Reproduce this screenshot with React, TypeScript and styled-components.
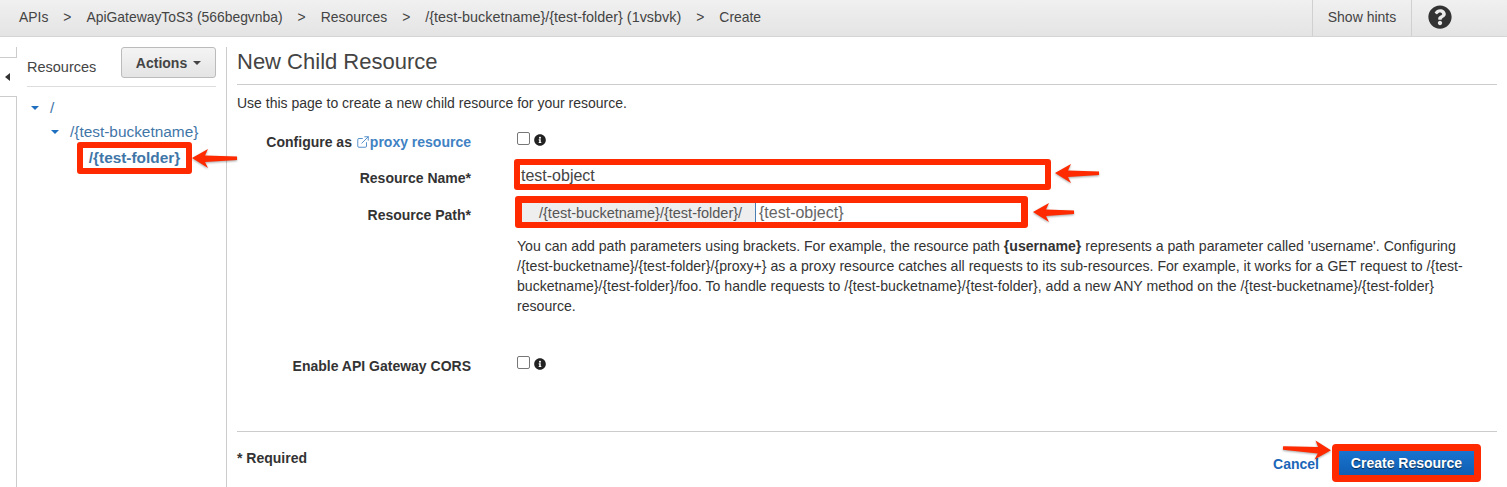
import React from 'react';
import styled, { createGlobalStyle } from 'styled-components';
import { FaInfoCircle, FaQuestionCircle } from 'react-icons/fa';
import { FiExternalLink } from 'react-icons/fi';

const GlobalStyle = createGlobalStyle`
  html, body {
    margin: 0;
    padding: 0;
    background: #fff;
  }
  body {
    font-family: 'Liberation Sans', Arial, sans-serif;
    font-size: 14px;
    color: #333;
  }
`;

const Page = styled.div`
  position: relative;
  width: 1507px;
  height: 487px;
  overflow: hidden;
  display: flex;
  flex-direction: column;
`;

const TopBar = styled.div`
  height: 37px;
  flex: none;
  display: flex;
  align-items: stretch;
  background: linear-gradient(#f0f0f0, #e4e4e4);
  border-bottom: 1px solid #d5d5d5;
  box-sizing: border-box;
`;

const Crumbs = styled.div`
  flex: 1;
  display: flex;
  align-items: center;
  gap: 15px;
  padding-left: 19px;
  padding-bottom: 3px;
  font-size: 13.9px;
  color: #444;
`;

const LongCrumb = styled.span`
  font-size: 14.4px;
`;

const HintButton = styled.div`
  width: 100px;
  display: flex;
  align-items: center;
  justify-content: center;
  padding-bottom: 3px;
  font-size: 14px;
  color: #444;
  border-left: 1px solid #d0d0d0;
  border-right: 1px solid #d0d0d0;
  box-sizing: border-box;
`;

const HelpSlot = styled.div`
  width: 95px;
  display: flex;
  align-items: center;
  padding-left: 16px;
  padding-bottom: 3px;
  box-sizing: border-box;
  color: #333;
  font-size: 24px;
`;

const Body = styled.div`
  flex: 1;
  display: flex;
  padding-top: 10px;
  min-height: 0;
`;

const Rail = styled.div`
  width: 17px;
  flex: none;
  display: flex;
  flex-direction: column;
`;

const RailTop = styled.div`
  height: 10px;
  border-right: 1px solid #ccc;
  border-bottom: 1px solid #ccc;
`;

const RailHandle = styled.div`
  height: 38px;
  display: flex;
  align-items: center;
  padding-left: 5px;
  &::before {
    content: '';
    border-style: solid;
    border-width: 4px 5px 4px 0;
    border-color: transparent #333 transparent transparent;
  }
`;

const RailBottom = styled.div`
  flex: 1;
  border-right: 1px solid #ccc;
  border-top: 1px solid #ccc;
`;

const Sidebar = styled.aside`
  width: 210px;
  flex: none;
  padding-left: 10px;
  padding-right: 10px;
  box-sizing: border-box;
  border-right: 1px solid #ccc;
`;

const SidebarHead = styled.div`
  display: flex;
  justify-content: space-between;
  height: 39px;
  border-bottom: 1px solid #ddd;
`;

const SidebarTitle = styled.div`
  font-size: 14.5px;
  color: #444;
  padding-top: 12px;
`;

const ActionsButton = styled.div`
  width: 95px;
  height: 31px;
  box-sizing: border-box;
  display: flex;
  align-items: center;
  justify-content: center;
  gap: 6px;
  font-size: 14px;
  font-weight: 700;
  color: #444;
  background: linear-gradient(#f4f4f4, #e4e4e4);
  border: 1px solid #bbb;
  border-radius: 3px;
  &::after {
    content: '';
    border-style: solid;
    border-width: 4px 4px 0 4px;
    border-color: #444 transparent transparent transparent;
  }
`;

const Tree = styled.div`
  padding-top: 9px;
`;

const TreeRow = styled.div<{ $indent: number }>`
  height: 24px;
  display: flex;
  align-items: center;
  padding-left: ${(p) => p.$indent}px;
  font-size: 15.4px;
  color: #3f76a8;
`;

const Caret = styled.span`
  border-style: solid;
  border-width: 4px 4.5px 0 4.5px;
  border-color: #1f6fc0 transparent transparent transparent;
  margin-right: 11px;
`;

const Highlight = styled.div`
  border: 6px solid #ff2a00;
  border-radius: 3px;
  box-sizing: border-box;
`;

const FolderHighlight = styled(Highlight)`
  width: 115px;
  height: 32px;
  margin-left: 50px;
  margin-top: -2px;
  display: flex;
  align-items: center;
  justify-content: center;
  font-size: 15.4px;
  font-weight: 700;
  color: #3f76a8;
`;

const Main = styled.main`
  flex: 1;
  min-width: 0;
  padding: 0 10px;
  display: flex;
  flex-direction: column;
`;

const PageTitle = styled.h1`
  margin: 0;
  height: 37px;
  font-size: 22px;
  font-weight: 400;
  line-height: 30px;
  color: #444;
  border-bottom: 1px solid #ccc;
`;

const Intro = styled.p`
  margin: 10px 0 0;
  line-height: 17px;
  font-size: 14px;
  color: #333;
`;

const Form = styled.div`
  display: grid;
  grid-template-columns: 234px 1fr;
  column-gap: 46px;
  align-items: start;
  margin-top: 19px;
`;

const Label = styled.div<{ $height: number }>`
  height: ${(p) => p.$height}px;
  display: flex;
  align-items: center;
  justify-content: flex-end;
  font-size: 14px;
  font-weight: 700;
  color: #333;
  white-space: pre;
`;

const ProxyLabel = styled(Label)`
  margin-bottom: 7px;
`;

const ProxyLink = styled.span`
  color: #3f82c4;
  display: inline-flex;
  align-items: center;
`;

const CheckRow = styled.div`
  display: flex;
  align-items: flex-start;
  gap: 4px;
  padding-top: 1px;
  font-size: 12px;
  color: #222;
`;

const InfoIcon = styled(FaInfoCircle)`
  margin-top: 2px;
`;

const CheckBox = styled.span`
  width: 13px;
  height: 13px;
  box-sizing: border-box;
  border: 1px solid #777;
  border-radius: 2px;
  background: #fff;
`;

const NameBox = styled(Highlight)`
  width: 537px;
  height: 31px;
  margin-left: -3px;
  margin-bottom: 6px;
  display: flex;
  align-items: center;
  padding-left: 1px;
  padding-top: 2px;
  font-size: 16px;
  color: #444;
`;

const PathBox = styled(Highlight)`
  width: 513px;
  height: 32px;
  margin-left: -2px;
  display: flex;
  border-width: 7px 7px 6px 7px;
`;

const PathPrefix = styled.div`
  width: 234px;
  flex: none;
  background: #eee;
  border-right: 1px solid #4a7fb5;
  box-sizing: border-box;
  padding-left: 17px;
  line-height: 20px;
  font-size: 14.5px;
  color: #555;
  white-space: nowrap;
`;

const PathInput = styled.div`
  flex: 1;
  line-height: 20px;
  font-size: 16px;
  color: #666;
  padding-left: 3px;
`;

const HelpText = styled.p`
  grid-column: 2;
  margin: 3px 0 0;
  width: 962px;
  font-size: 14.1px;
  line-height: 20px;
  color: #333;
`;

const CorsLabel = styled(Label)`
  margin-top: 39px;
`;

const CorsCheck = styled(CheckRow)`
  margin-top: 39px;
`;

const Footer = styled.div`
  margin-top: auto;
  margin-bottom: 4px;
  height: 51px;
  border-top: 1px solid #ccc;
  display: flex;
  justify-content: space-between;
`;

const Required = styled.div`
  padding-top: 18px;
  font-size: 14px;
  font-weight: 700;
  color: #333;
`;

const FooterActions = styled.div`
  display: flex;
  align-items: flex-start;
  margin-right: 16px;
`;

const CancelLink = styled.span`
  margin-top: 24px;
  margin-right: 13px;
  font-size: 14px;
  font-weight: 700;
  color: #1b66b8;
`;

const CreateHighlight = styled(Highlight)`
  width: 149px;
  height: 38px;
  margin-top: 12px;
  border-width: 7px;
  border-radius: 4px;
`;

const CreateButton = styled.div`
  height: 100%;
  display: flex;
  align-items: center;
  justify-content: center;
  background: linear-gradient(#1a73cf, #0f5fb3);
  color: #fff;
  font-size: 14px;
  font-weight: 700;
  text-shadow: 0 1px 1px rgba(0, 0, 0, 0.6);
`;

// the red call-out arrows sit on top of the page
const ArrowMark = styled.svg<{ $x: number; $y: number; $w: number }>`
  position: absolute;
  left: ${(p) => p.$x}px;
  top: ${(p) => p.$y}px;
  width: ${(p) => p.$w}px;
  height: 22px;
  overflow: visible;
  filter: drop-shadow(0 1px 1px rgba(0, 0, 0, 0.35));
`;

function Arrow({ x, y, w, flip }: { x: number; y: number; w: number; flip?: boolean }) {
  return (
    <ArrowMark $x={x} $y={y} $w={w} viewBox={`0 0 ${w} 22`}>
      <path
        fill="#ff2a00"
        transform={flip ? `translate(${w} 0) scale(-1 1) rotate(-3 ${w / 2} 11)` : undefined}
        d={`M0 11 L16 2 L13 8.5 L${w} 9.5 L${w} 13 L13 15 L16 21 Z`}
      />
    </ArrowMark>
  );
}

const helpBefore = 'You can add path parameters using brackets. For example, the resource path ';
const helpAfter =
  " represents a path parameter called 'username'. Configuring /{test-bucketname}/{test-folder}/{proxy+} as a proxy resource catches all requests to its sub-resources. For example, it works for a GET request to /{test-bucketname}/{test-folder}/foo. To handle requests to /{test-bucketname}/{test-folder}, add a new ANY method on the /{test-bucketname}/{test-folder} resource.";

export default function App() {
  return (
    <Page>
      <GlobalStyle />
      <TopBar>
        <Crumbs>
          <span>APIs</span>
          <span>&gt;</span>
          <span>ApiGatewayToS3 (566begvnba)</span>
          <span>&gt;</span>
          <span>Resources</span>
          <span>&gt;</span>
          <LongCrumb>{'/{test-bucketname}/{test-folder} (1vsbvk)'}</LongCrumb>
          <span>&gt;</span>
          <span>Create</span>
        </Crumbs>
        <HintButton>Show hints</HintButton>
        <HelpSlot>
          <FaQuestionCircle />
        </HelpSlot>
      </TopBar>
      <Body>
        <Rail>
          <RailTop />
          <RailHandle />
          <RailBottom />
        </Rail>
        <Sidebar>
          <SidebarHead>
            <SidebarTitle>Resources</SidebarTitle>
            <ActionsButton>Actions</ActionsButton>
          </SidebarHead>
          <Tree>
            <TreeRow $indent={4}>
              <Caret />/
            </TreeRow>
            <TreeRow $indent={24}>
              <Caret />
              {'/{test-bucketname}'}
            </TreeRow>
            <FolderHighlight>{'/{test-folder}'}</FolderHighlight>
          </Tree>
        </Sidebar>
        <Main>
          <PageTitle>New Child Resource</PageTitle>
          <Intro>Use this page to create a new child resource for your resource.</Intro>
          <Form>
            <ProxyLabel $height={21}>
              Configure as{' '}
              <ProxyLink>
                <FiExternalLink size={14} strokeWidth={1.5} />
                proxy resource
              </ProxyLink>
            </ProxyLabel>
            <CheckRow>
              <CheckBox />
              <InfoIcon />
            </CheckRow>
            <Label $height={37}>Resource Name*</Label>
            <NameBox>test-object</NameBox>
            <Label $height={37}>Resource Path*</Label>
            <PathBox>
              <PathPrefix>{'/{test-bucketname}/{test-folder}/'}</PathPrefix>
              <PathInput>{'{test-object}'}</PathInput>
            </PathBox>
            <HelpText>
              {helpBefore}
              <b>{'{username}'}</b>
              {helpAfter}
            </HelpText>
            <CorsLabel $height={21}>Enable API Gateway CORS</CorsLabel>
            <CorsCheck>
              <CheckBox />
              <InfoIcon />
            </CorsCheck>
          </Form>
          <Footer>
            <Required>* Required</Required>
            <FooterActions>
              <CancelLink>Cancel</CancelLink>
              <CreateHighlight>
                <CreateButton>Create Resource</CreateButton>
              </CreateHighlight>
            </FooterActions>
          </Footer>
        </Main>
      </Body>
      <Arrow x={192} y={147} w={45} />
      <Arrow x={1055} y={162} w={44} />
      <Arrow x={1033} y={201} w={41} />
      <Arrow x={1283} y={438} w={48} flip />
    </Page>
  );
}
